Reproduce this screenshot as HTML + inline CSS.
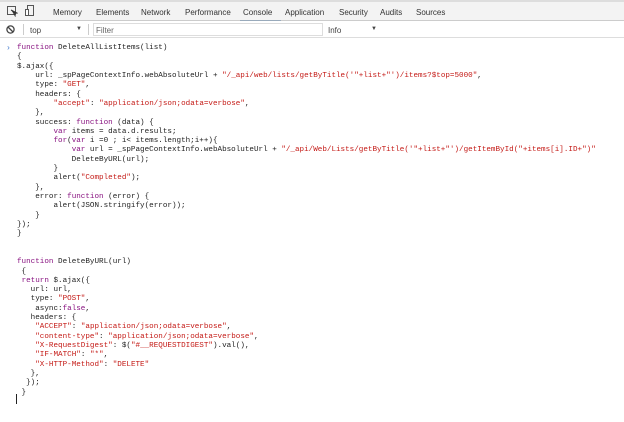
<!DOCTYPE html>
<html><head><meta charset="utf-8"><style>
*{margin:0;padding:0;box-sizing:border-box}
body{width:624px;height:422px;background:#fff;overflow:hidden;font-family:"Liberation Sans",sans-serif;position:relative}
.bar1{position:absolute;left:0;top:0;width:624px;height:21px;background:#f3f3f3;border-bottom:1px solid #ccc;border-top:2px solid #ddd}
.tab{position:absolute;top:6px;font-size:8px;color:#333}
.ul{position:absolute;left:240px;top:18px;width:41px;height:2px;background:#9ab}
.bar2{position:absolute;left:0;top:21px;width:624px;height:17px;background:#fff;border-bottom:1px solid #ddd}
.t2{position:absolute;font-size:8px;color:#444;top:5px}
pre{position:absolute;left:17px;top:44px;font-family:"Liberation Mono",monospace;font-size:7.6px;line-height:9.32px;color:#222}
.k{color:#881280}.s{color:#c41a16}
</style></head><body>
<div class="bar1">
<svg style="position:absolute;left:7px;top:4px" width="11" height="11"><rect x="0.5" y="0.5" width="8" height="8" fill="none" stroke="#555"/><path d="M4 4 L10 7 L7 7.5 L8.5 10.5" stroke="#333" fill="#333"/></svg>
<svg style="position:absolute;left:25px;top:3px" width="10" height="12"><rect x="2.5" y="0.5" width="6" height="10" fill="none" stroke="#555"/><rect x="0.5" y="4.5" width="3" height="6" fill="#fff" stroke="#555"/></svg>
<div class="tab" style="left:53px">Memory</div>
<div class="tab" style="left:96px">Elements</div>
<div class="tab" style="left:141px">Network</div>
<div class="tab" style="left:185px">Performance</div>
<div class="tab" style="left:243px">Console</div>
<div class="tab" style="left:285px">Application</div>
<div class="tab" style="left:339px">Security</div>
<div class="tab" style="left:380px">Audits</div>
<div class="tab" style="left:416px">Sources</div>
<div class="ul"></div>
</div>
<div class="bar2">
<svg style="position:absolute;left:6px;top:4px" width="9" height="9"><circle cx="4.5" cy="4.5" r="3.6" fill="none" stroke="#444" stroke-width="1.3"/><path d="M2 2 L7 7" stroke="#444" stroke-width="1.3"/></svg>
<div style="position:absolute;left:23px;top:3px;width:1px;height:11px;background:#ccc"></div>
<div class="t2" style="left:30px">top</div>
<div class="t2" style="left:76px;font-size:6px;top:5px">▼</div>
<div style="position:absolute;left:88px;top:3px;width:1px;height:11px;background:#ccc"></div>
<div style="position:absolute;left:93px;top:2px;width:230px;height:13px;border:1px solid #ddd"></div>
<div class="t2" style="left:96px;color:#666">Filter</div>
<div class="t2" style="left:328px">Info</div>
<div class="t2" style="left:371px;font-size:6px;top:5px">▼</div>
</div>
<div style="position:absolute;left:6px;top:44px;color:#4a7fd0;font-size:8px;font-family:'Liberation Mono',monospace">›</div>
<pre><span class="k">function</span> DeleteAllListItems(list)
{
$.ajax({
    url: _spPageContextInfo.webAbsoluteUrl + <span class="s">"/_api/web/lists/getByTitle('"+list+"')/items?$top=5000"</span>,
    type: <span class="s">"GET"</span>,
    headers: {
        <span class="s">"accept"</span>: <span class="s">"application/json;odata=verbose"</span>,
    },
    success: <span class="k">function</span> (data) {
        <span class="k">var</span> items = data.d.results;
        <span class="k">for</span>(<span class="k">var</span> i =0 ; i&lt; items.length;i++){
            <span class="k">var</span> url = _spPageContextInfo.webAbsoluteUrl + <span class="s">"/_api/Web/Lists/getByTitle('"+list+"')/getItemById("+items[i].ID+")"</span>
            DeleteByURL(url);
        }
        alert(<span class="s">"Completed"</span>);
    },
    error: <span class="k">function</span> (error) {
        alert(JSON.stringify(error));
    }
});
}


<span class="k">function</span> DeleteByURL(url)
 {
 <span class="k">return</span> $.ajax({
   url: url,
   type: <span class="s">"POST"</span>,
    async:<span class="k">false</span>,
   headers: {
    <span class="s">"ACCEPT"</span>: <span class="s">"application/json;odata=verbose"</span>,
    <span class="s">"content-type"</span>: <span class="s">"application/json;odata=verbose"</span>,
    <span class="s">"X-RequestDigest"</span>: $(<span class="s">"#__REQUESTDIGEST"</span>).val(),
    <span class="s">"IF-MATCH"</span>: <span class="s">"*"</span>,
    <span class="s">"X-HTTP-Method"</span>: <span class="s">"DELETE"</span>
   },
  });
 }
</pre>
<div style="position:absolute;left:16px;top:394px;width:1px;height:10px;background:#222"></div>
</body></html>
